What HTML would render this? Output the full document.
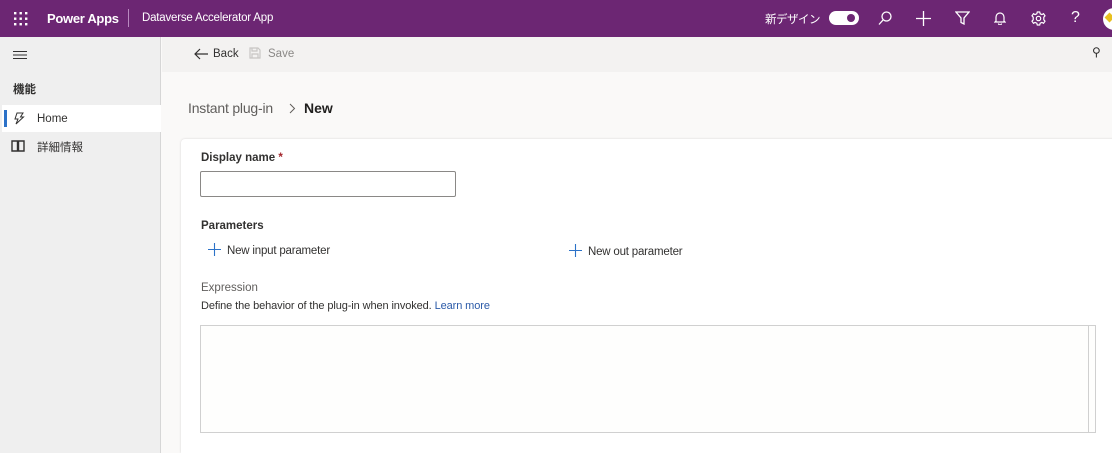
<!DOCTYPE html>
<html style="width:1112px;height:453px;overflow:hidden"><head><meta charset="utf-8">
<style>
*{margin:0;padding:0;box-sizing:border-box}
body{width:1112px;height:453px;overflow:hidden;font-family:"Liberation Sans","Noto Sans CJK JP",sans-serif;background:#faf9f8;position:relative;color:#323130}
.top{position:absolute;left:0;top:0;width:1112px;height:37px;background:#6c2673;color:#fff}
.abs{position:absolute}
.side{position:absolute;left:0;top:37px;width:161px;height:416px;background:#efefef;border-right:1px solid #d6d6d6}
.cmd{position:absolute;left:162px;top:37px;width:950px;height:35px;background:#f3f2f1}
.card{position:absolute;left:181px;top:139px;width:940px;height:314px;background:#fff;border-radius:4px 0 0 0;box-shadow:0 0 2px rgba(0,0,0,.15)}
.lbl{position:absolute;font-size:11.5px;font-weight:bold;color:#323130}
.t{font-size:11.5px}
</style></head><body>
<div class="top">
  <svg class="abs" style="left:14px;top:12px" width="14" height="14" viewBox="0 0 14 14" fill="#fff">
    <rect x="0" y="0" width="2.4" height="2.4"/><rect x="5.5" y="0" width="2.4" height="2.4"/><rect x="11" y="0" width="2.4" height="2.4"/>
    <rect x="0" y="5.5" width="2.4" height="2.4"/><rect x="5.5" y="5.5" width="2.4" height="2.4"/><rect x="11" y="5.5" width="2.4" height="2.4"/>
    <rect x="0" y="11" width="2.4" height="2.4"/><rect x="5.5" y="11" width="2.4" height="2.4"/><rect x="11" y="11" width="2.4" height="2.4"/>
  </svg>
  <div class="abs" style="left:47px;top:11px;font-size:13px;font-weight:bold;letter-spacing:-0.3px">Power Apps</div>
  <div class="abs" style="left:128px;top:9px;width:1px;height:18px;background:#b98ac0"></div>
  <div class="abs" style="left:142px;top:12px;font-size:11.5px;letter-spacing:-0.2px">Dataverse Accelerator App</div>
  <div class="abs" style="left:765px;top:11px;font-size:11.5px;letter-spacing:-0.5px">新デザイン</div>
  <div class="abs" style="left:829px;top:11px;width:30px;height:14px;border-radius:7px;background:#fff"><div class="abs" style="left:18px;top:3px;width:8px;height:8px;border-radius:50%;background:#6c2673"></div></div>
  <svg class="abs" style="left:878px;top:11px" width="14" height="15" viewBox="0 0 14 15" fill="none" stroke="#fff" stroke-width="1.3"><circle cx="8.5" cy="5.5" r="4.5"/><path d="M5.3 8.7L1 13.5"/></svg>
  <svg class="abs" style="left:916px;top:11px" width="15" height="15" stroke="#fff" stroke-width="1.3"><path d="M7.5 0V15M0 7.5H15"/></svg>
  <svg class="abs" style="left:955px;top:11px" width="15" height="14" fill="none" stroke="#fff" stroke-width="1.3"><path d="M1 1H14L9 7V13L6 11.5V7Z"/></svg>
  <svg class="abs" style="left:994px;top:11px" width="12" height="14" fill="none" stroke="#fff" stroke-width="1.2"><path d="M2 10V6A4 4 0 0 1 10 6V10L11 11H1Z M4.5 12.5A1.5 1.5 0 0 0 7.5 12.5"/></svg>
  <svg class="abs" style="left:1031px;top:11px" width="15" height="15" viewBox="0 0 15 15" fill="none" stroke="#fff" stroke-width="1.2"><circle cx="7.5" cy="7.5" r="2.2"/><path d="M6.3 1H8.7L9.2 2.8L10.9 3.6L12.5 2.7L14 4.8L12.8 6.2V8.8L14 10.2L12.5 12.3L10.9 11.4L9.2 12.2L8.7 14H6.3L5.8 12.2L4.1 11.4L2.5 12.3L1 10.2L2.2 8.8V6.2L1 4.8L2.5 2.7L4.1 3.6L5.8 2.8Z"/></svg>
  <div class="abs" style="left:1071px;top:9px;font-size:16px">?</div>
  <div class="abs" style="left:1103px;top:8px;width:22px;height:22px;border-radius:50%;background:#fff"><div class="abs" style="left:3px;top:6px;width:7px;height:7px;background:#e8c020;transform:rotate(45deg)"></div></div>
</div>
<div class="side">
  <svg class="abs" style="left:13px;top:13px" width="14" height="10" stroke="#323130" stroke-width="1"><path d="M0 1.5H14M0 5H14M0 8.5H14"/></svg>
  <div class="abs" style="left:13px;top:44px;font-size:11.5px;font-weight:bold">機能</div>
  <div class="abs" style="left:2px;top:68px;width:159px;height:27px;background:#fff"></div>
  <div class="abs" style="left:4px;top:73px;width:3px;height:17px;background:#2c72c8"></div>
  <svg class="abs" style="left:13px;top:75px" width="12" height="13" fill="none" stroke="#323130" stroke-width="1"><path d="M4 1H10L7.5 5H10.5L3 12L5 7H2Z"/></svg>
  <div class="abs t" style="left:37px;top:76px">Home</div>
  <svg class="abs" style="left:11px;top:103px" width="14" height="12" fill="none" stroke="#323130" stroke-width="1.4"><path d="M1 1H6.5V11H1Z M7.5 1H13V11H7.5Z"/></svg>
  <div class="abs t" style="left:37px;top:102px">詳細情報</div>
</div>
<div class="cmd">
  <svg class="abs" style="left:32px;top:11px" width="14" height="12" fill="none" stroke="#323130" stroke-width="1.2"><path d="M6 1L1 6L6 11M1 6H14"/></svg>
  <div class="abs t" style="left:51px;top:11px">Back</div>
  <svg class="abs" style="left:87px;top:10px" width="12" height="12" fill="none" stroke="#c8c6c4" stroke-width="1.2"><path d="M1 1H9L11 3V11H1Z M3 1V4H8V1 M3 11V7H9V11"/></svg>
  <div class="abs t" style="left:106px;top:11px;color:#8a8886">Save</div>
  <div class="abs" style="left:930px;top:8px;font-size:12px">⚲</div>
</div>
<div class="abs" style="left:188px;top:100px;font-size:14px;color:#605e5c;letter-spacing:-0.2px">Instant plug-in</div>
<svg class="abs" style="left:288px;top:103px" width="8" height="11" fill="none" stroke="#605e5c" stroke-width="1"><path d="M2 1L6.5 5.5L2 10"/></svg>
<div class="abs" style="left:304px;top:100px;font-size:14px;font-weight:bold;color:#201f1e">New</div>
<div class="card"></div>
<div class="lbl" style="left:201px;top:152px">Display name <span style="color:#a4262c">*</span></div>
<div class="abs" style="left:200px;top:171px;width:256px;height:26px;border:1px solid #8a8886;border-radius:2px;background:#fff"></div>
<div class="lbl" style="left:201px;top:220px">Parameters</div>
<svg class="abs" style="left:208px;top:243px" width="13" height="13" stroke="#2c72c8" stroke-width="1.1"><path d="M6.5 0V13M0 6.5H13"/></svg>
<div class="abs t" style="left:227px;top:245px;letter-spacing:-0.2px">New input parameter</div>
<svg class="abs" style="left:569px;top:244px" width="13" height="13" stroke="#2c72c8" stroke-width="1.1"><path d="M6.5 0V13M0 6.5H13"/></svg>
<div class="abs t" style="left:588px;top:246px;letter-spacing:-0.2px">New out parameter</div>
<div class="abs t" style="left:201px;top:282px;color:#605e5c">Expression</div>
<div class="abs" style="left:201px;top:300px;font-size:11px;color:#323130;letter-spacing:-0.1px">Define the behavior of the plug-in when invoked. <span style="color:#2b5aa8">Learn more</span></div>
<div class="abs" style="left:200px;top:325px;width:896px;height:108px;border:1px solid #d0d0d0;background:#fefefd"><div class="abs" style="left:887px;top:0;width:1px;height:106px;background:#d0d0d0"></div></div>
</body></html>
